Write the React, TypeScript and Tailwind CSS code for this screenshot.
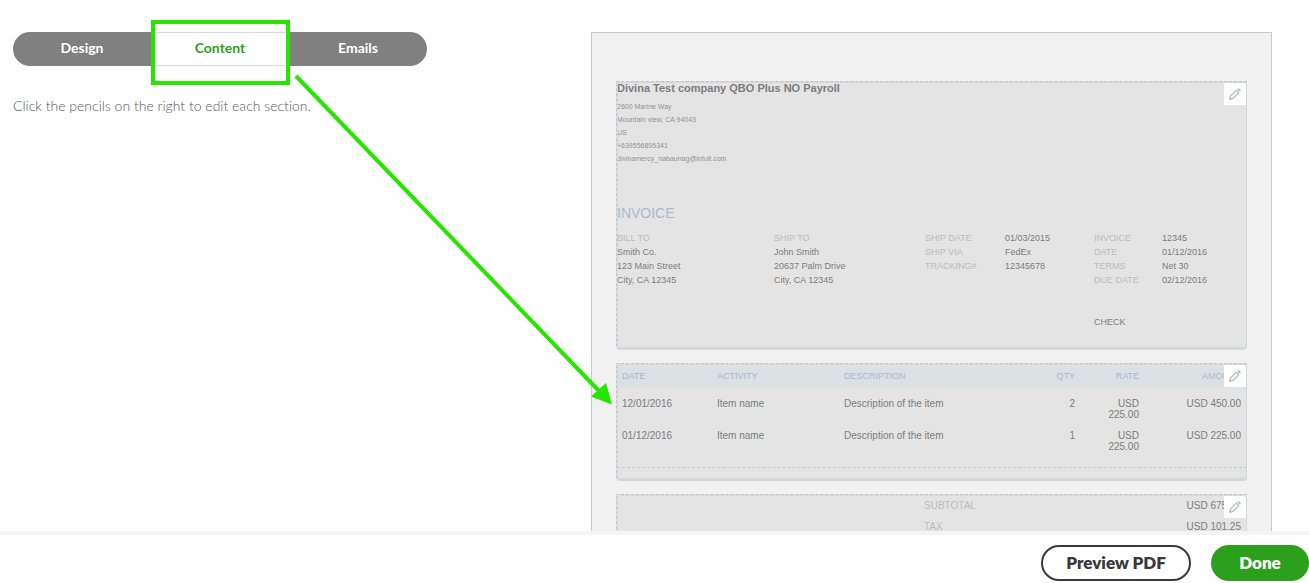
import type { ReactNode } from 'react';
import clsx from 'clsx';

const tabs = ['Design', 'Content', 'Emails'];

const companyLines = [
  '2600 Marine Way',
  'Mountain view, CA 94043',
  'US',
  '+639556895341',
  'divinamercy_nabaunag@intuit.com',
];

const addresses = [
  { label: 'BILL TO', lines: ['Smith Co.', '123 Main Street', 'City, CA 12345'] },
  { label: 'SHIP TO', lines: ['John Smith', '20637 Palm Drive', 'City, CA 12345'] },
];

const shipping = [
  ['SHIP DATE', '01/03/2015'],
  ['SHIP VIA', 'FedEx'],
  ['TRACKING#', '12345678'],
];

const invoiceInfo = [
  ['INVOICE', '12345'],
  ['DATE', '01/12/2016'],
  ['TERMS', 'Net 30'],
  ['DUE DATE', '02/12/2016'],
];

const items = [
  { date: '12/01/2016', name: 'Item name', description: 'Description of the item', qty: 2, rate: 'USD 225.00', amount: 'USD 450.00' },
  { date: '01/12/2016', name: 'Item name', description: 'Description of the item', qty: 1, rate: 'USD 225.00', amount: 'USD 225.00' },
];

const totals = [
  ['SUBTOTAL', 'USD 675.00'],
  ['TAX', 'USD 101.25'],
];

function PencilIcon() {
  return (
    <svg viewBox="0 0 12 12" className="h-3 w-3" fill="none" aria-hidden="true">
      <path d="M0.9 11.1 L1.6 7.9 L6.9 2.6 Q7.4 2.1 7.9 2.6 L9.4 4.1 Q9.9 4.6 9.4 5.1 L4.1 10.4 Z" stroke="#b5b9c1" strokeWidth="1.3" strokeLinejoin="round" />
      <path d="M0.3 11.8 L1 9 L3 11 Z" fill="#b5b9c1" />
      <path d="M8.2 1.1 L9 0.4 Q9.6 -0.1 10.2 0.5 L11.5 1.8 Q12.1 2.4 11.6 3 L10.900 3.8 Z" fill="#b5b9c1" />
    </svg>
  );
}

function EditableSection({ label, className, children }: { label: string; className?: string; children: ReactNode }) {
  return (
    <section className={clsx('relative rounded-b-[4px] border-t border-l border-dashed border-[#c3c5c8] bg-[#e4e4e4]', className)}>
      {children}
      <span className="pointer-events-none absolute inset-0 rounded-[4px] border border-b-[3px] border-[#d4d7dc]" />
      <button type="button" aria-label={label} className="absolute top-px right-px flex h-[22px] w-[22px] items-center justify-center rounded-tr-[3px] bg-white">
        <PencilIcon />
      </button>
    </section>
  );
}

function DetailList({ rows, className }: { rows: string[][]; className: string }) {
  return (
    <dl className={clsx('grid', className)}>
      {rows.map(([label, value]) => (
        <div key={label} className="contents">
          <dt className="text-[#bcbcbc]">{label}</dt>
          <dd>{value}</dd>
        </div>
      ))}
    </dl>
  );
}

function InvoiceHeader() {
  return (
    <EditableSection label="Edit header" className="h-[269px] text-[#7d7d7d]">
      <h2 className="text-[11px] leading-[13px] font-bold">Divina Test company QBO Plus NO Payroll</h2>
      <address className="mt-[5px] text-[7px] leading-[13px] text-[#929292] not-italic">
        {companyLines.map((line) => <p key={line}>{line}</p>)}
      </address>
      <h3 className="mt-10 text-[14px] leading-4 text-[#a6bccd]">INVOICE</h3>
      <div className="mt-[10px] grid grid-cols-[157px_151px_169px_1fr] text-[9px] leading-[14px]">
        {addresses.map((address) => (
          <div key={address.label}>
            <p className="text-[#bcbcbc]">{address.label}</p>
            {address.lines.map((line) => <p key={line}>{line}</p>)}
          </div>
        ))}
        <DetailList rows={shipping} className="auto-rows-[14px] grid-cols-[80px_1fr]" />
        <div>
          <DetailList rows={invoiceInfo} className="auto-rows-[14px] grid-cols-[68px_1fr]" />
          <p className="mt-7">CHECK</p>
        </div>
      </div>
    </EditableSection>
  );
}

function InvoiceItems() {
  return (
    <EditableSection label="Edit items" className="pb-[13px]">
      <div className="border-b border-dashed border-[#c8cacd] pb-[15px]">
        <table className="w-full table-fixed text-left text-[10px] leading-[11px] text-[#7d7d7d]">
          <colgroup>
            <col className="w-[95px]" />
            <col className="w-[127px]" />
            <col />
            <col className="w-10" />
            <col className="w-16" />
            <col className="w-[102px]" />
          </colgroup>
          <thead>
            <tr className="h-6 bg-[#dce1e4] text-[9px] text-[#a6bccd] *:pr-[6px] *:pl-[5px] *:font-normal">
              <th>DATE</th>
              <th>ACTIVITY</th>
              <th>DESCRIPTION</th>
              <th className="text-right">QTY</th>
              <th className="text-right">RATE</th>
              <th className="text-right">AMOUNT</th>
            </tr>
          </thead>
          <tbody>
            {items.map((item) => (
              <tr key={item.date} className="align-top *:pt-[10px] *:pr-[6px] *:pl-[5px]">
                <td>{item.date}</td>
                <td>{item.name}</td>
                <td>{item.description}</td>
                <td className="text-right">{item.qty}</td>
                <td className="text-right">{item.rate}</td>
                <td className="text-right">{item.amount}</td>
              </tr>
            ))}
          </tbody>
        </table>
      </div>
    </EditableSection>
  );
}

function InvoiceTotals() {
  return (
    <EditableSection label="Edit totals" className="h-[120px]">
      <dl className="ml-[307px] text-[10px] leading-[21px]">
        {totals.map(([label, value]) => (
          <div key={label} className="flex justify-between pr-[6px]">
            <dt className="text-[#bcbcbc]">{label}</dt>
            <dd className="text-[#7d7d7d]">{value}</dd>
          </div>
        ))}
      </dl>
    </EditableSection>
  );
}

function Arrow() {
  return (
    <svg className="pointer-events-none absolute top-0 left-0 h-[420px] w-[630px]" viewBox="0 0 630 420" aria-hidden="true">
      <line x1="296" y1="76" x2="600" y2="392" stroke="#26e600" strokeWidth="4" />
      <path d="M612 404.500 L591 396.500 L606 383 Z" fill="#26e600" />
    </svg>
  );
}

export default function App() {
  return (
    <div className="flex h-screen flex-col overflow-hidden bg-white font-['Lato',sans-serif] [font-variant-ligatures:none]">
      <main className="relative flex min-h-0 flex-1 overflow-hidden pt-8 pr-[37px]">
        <div className="w-[591px] shrink-0 pl-[13px]">
          <div role="tablist" className="flex h-[34px] w-[414px] text-sm font-bold">
            {tabs.map((tab) => {
              const active = tab === 'Content';

              return (
                <button
                  key={tab}
                  type="button"
                  role="tab"
                  aria-selected={active}
                  className={clsx(
                    'relative flex-1 pb-0.5 first:rounded-l-full last:rounded-r-full',
                    active ? 'border-y border-[#d9d9d9] bg-white text-[#2ca01c]' : 'bg-[#808080] text-white',
                  )}
                >
                  {tab}
                  {active ? <span className="absolute -top-[13px] -right-px -bottom-5 left-0 z-10 border-4 border-[#26e600]" /> : null}
                </button>
              );
            })}
          </div>
          <p className="mt-[30px] text-sm leading-5 font-light text-[#56575c]">Click the pencils on the right to edit each section.</p>
        </div>

        <div className="h-[700px] min-w-0 flex-1 space-y-[13px] border border-[#c8c9c9] bg-[#f1f1f1] px-6 pt-12 font-['Liberation_Sans',sans-serif]">
          <InvoiceHeader />
          <InvoiceItems />
          <InvoiceTotals />
        </div>
        <Arrow />
      </main>

      <footer className="flex h-[52px] shrink-0 justify-end gap-5 border-t-4 border-[#f4f5f8] pt-[10px] text-[17px] font-extrabold">
        <button type="button" className="h-9 w-[150px] rounded-full border-2 border-[#393a3d] text-[#393a3d]">Preview PDF</button>
        <button type="button" className="h-9 w-[98px] rounded-full bg-[#2ca01c] text-white">Done</button>
      </footer>
    </div>
  );
}
